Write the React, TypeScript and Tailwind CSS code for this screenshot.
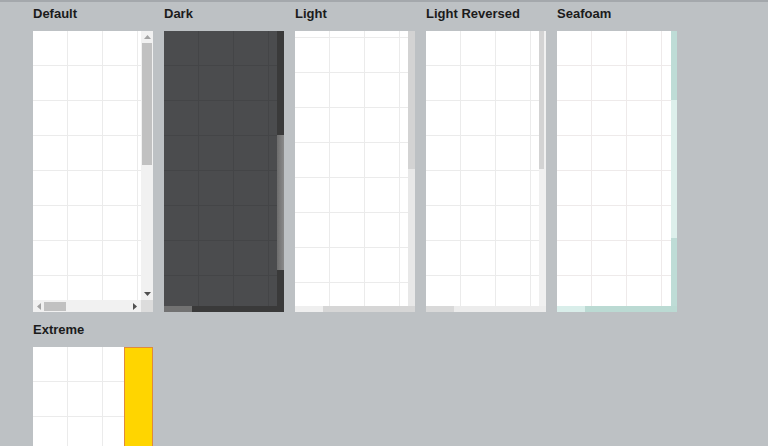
import React from 'react';

const cells = Array.from({ length: 120 });

const Grid = ({ line, shiftY = 0 }: { line: string; shiftY?: number }) => (
  <div className="flex w-[420px] flex-wrap" style={{ marginTop: -shiftY }}>
    {cells.map((_, i) => (
      <div key={i} className={`h-[35px] w-[35px] border-r border-b ${line}`} />
    ))}
  </div>
);

const Tri = ({ dir, color = '#505050' }: { dir: 'up' | 'down' | 'left' | 'right'; color?: string }) => {
  const pts = {
    up: '0,4 3.5,0 7,4',
    down: '0,0 3.5,4 7,0',
    left: '4,0 0,3.5 4,7',
    right: '0,0 4,3.5 0,7',
  }[dir];
  const vertical = dir === 'up' || dir === 'down';
  return (
    <svg width={vertical ? 7 : 4} height={vertical ? 4 : 7} viewBox={vertical ? '0 0 7 4' : '0 0 4 7'}>
      <polygon points={pts} fill={color} />
    </svg>
  );
};

const Title = ({ children }: { children: React.ReactNode }) => (
  <div className="h-[29px] pt-[4px] text-[13px] leading-[16px] font-bold text-[#1b1b1b]">{children}</div>
);

const DefaultBox = () => (
  <div className="flex h-[281px] w-[120px] flex-col bg-white">
    <div className="flex min-h-0 flex-1">
      <div className="flex-1 overflow-hidden">
        <Grid line="border-[#ebebeb]" />
      </div>
      <div className="flex w-[12px] flex-col items-center bg-[#f1f1f1]">
        <div className="flex h-[12px] items-center justify-center">
          <Tri dir="up" color="#a3a3a3" />
        </div>
        <div className="h-[122px] w-[10px] bg-[#c1c1c1]" />
        <div className="flex-1" />
        <div className="flex h-[12px] items-center justify-center">
          <Tri dir="down" color="#505050" />
        </div>
      </div>
    </div>
    <div className="flex h-[12px] bg-[#f1f1f1]">
      <div className="flex w-[11px] items-center justify-center">
        <Tri dir="left" color="#a3a3a3" />
      </div>
      <div className="my-[1.5px] w-[22px] bg-[#c1c1c1]" />
      <div className="flex-1" />
      <div className="flex w-[12px] items-center justify-center">
        <Tri dir="right" color="#505050" />
      </div>
      <div className="w-[12px] bg-[#dcdcdc]" />
    </div>
  </div>
);

const DarkBox = () => (
  <div className="flex h-[281px] w-[120px] flex-col bg-[#4b4c4e]">
    <div className="flex min-h-0 flex-1">
      <div className="flex-1 overflow-hidden">
        <Grid line="border-[#444547]" />
      </div>
      <div className="flex w-[7px] flex-col bg-[#3a3a3a]">
        <div className="h-[104px]" />
        <div className="h-[135px] bg-[linear-gradient(90deg,#6c6c6c,#8a8a8a)]" />
      </div>
    </div>
    <div className="flex h-[6px] bg-[#3a3a3a]">
      <div className="w-[28px] bg-[#727272]" />
    </div>
  </div>
);

const LightBox = () => (
  <div className="flex h-[281px] w-[120px] flex-col bg-white">
    <div className="flex min-h-0 flex-1">
      <div className="flex-1 overflow-hidden">
        <Grid line="border-[#ebebeb]" shiftY={28} />
      </div>
      <div className="flex w-[7px] flex-col bg-[#e8e8e8]">
        <div className="h-[138px] bg-[#d3d3d3]" />
      </div>
    </div>
    <div className="flex h-[6px] bg-[#d6d6d6]">
      <div className="w-[28px] bg-[#efefef]" />
    </div>
  </div>
);

const LightReversedBox = () => (
  <div className="flex h-[281px] w-[120px] flex-col bg-white">
    <div className="flex min-h-0 flex-1">
      <div className="flex-1 overflow-hidden">
        <Grid line="border-[#ebebeb]" />
      </div>
      <div className="flex w-[7px] flex-col bg-[#f0f0f0]">
        <div className="h-[138px] w-[5px] bg-[#d3d3d3]" />
      </div>
    </div>
    <div className="flex h-[6px] bg-[#ececec]">
      <div className="w-[28px] bg-[#d9d9d9]" />
    </div>
  </div>
);

const SeafoamBox = () => (
  <div className="flex h-[281px] w-[120px] flex-col bg-white">
    <div className="flex min-h-0 flex-1">
      <div className="flex-1 overflow-hidden">
        <Grid line="border-[#eeeaea]" />
      </div>
      <div className="flex w-[6px] flex-col bg-[#bedcd6]">
        <div className="h-[69px]" />
        <div className="h-[138px] bg-[#ddefeb]" />
      </div>
    </div>
    <div className="flex h-[6px] bg-[#bbdad3]">
      <div className="w-[28px] bg-[#d9eeea]" />
    </div>
  </div>
);

const ExtremeBox = () => (
  <div className="flex h-[281px] w-[120px] bg-white">
    <div className="flex-1 overflow-hidden">
      <Grid line="border-[#ebebeb]" />
    </div>
    <div className="w-[29px] border border-[#e08a3c] bg-[#ffd500]" />
  </div>
);

const panels = [
  { name: 'Default', box: <DefaultBox /> },
  { name: 'Dark', box: <DarkBox /> },
  { name: 'Light', box: <LightBox /> },
  { name: 'Light Reversed', box: <LightReversedBox /> },
  { name: 'Seafoam', box: <SeafoamBox /> },
];

export default function App() {
  return (
    <div
      className="h-[446px] w-[768px] overflow-hidden border-t-2 border-[#a4a8ac] bg-[#bdc1c4] pl-[33px]"
      style={{ fontFamily: '"Liberation Sans", Arial, sans-serif' }}
    >
      <div className="flex gap-[11px]">
        {panels.map((p) => (
          <div key={p.name} className="w-[120px]">
            <Title>{p.name}</Title>
            {p.box}
          </div>
        ))}
      </div>
      <div className="mt-[6px] w-[120px]">
        <Title>Extreme</Title>
        <ExtremeBox />
      </div>
    </div>
  );
}
